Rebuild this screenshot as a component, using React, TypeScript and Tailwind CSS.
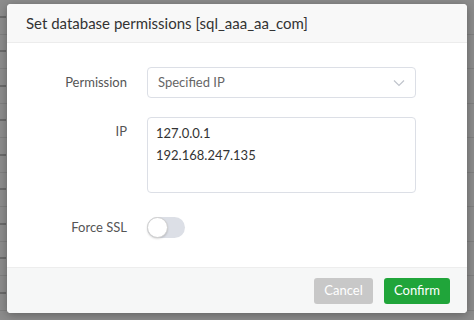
import React from "react";

export default function App() {
  const rows = Array.from({ length: 9 });
  return (
    <div
      className="relative w-[474px] h-[320px] overflow-hidden bg-[#8c8c8c]"
      style={{ fontFamily: 'Lato, "Noto Sans", sans-serif' }}
    >
      <div className="absolute inset-0 flex flex-col">
        {rows.map((_, i) => (
          <div key={i} className="h-[34.5px] shrink-0 border-b border-[#7f7f7f] flex items-center">
            <div className="w-[6px] h-[2px] bg-[#6a6a6a]" />
          </div>
        ))}
      </div>
      <div className="absolute left-[7px] top-[4px] w-[460px] h-[309px] bg-white rounded-[4px] shadow-[0_2px_10px_rgba(0,0,0,0.3)] flex flex-col overflow-hidden">
        <div className="h-[39px] shrink-0 bg-[#f8f8f8] border-b border-[#ececec] flex items-center pl-[19px] text-[15px] text-[#333]">
          Set database permissions [sql_aaa_aa_com]
        </div>
        <div className="flex-1 flex flex-col pt-[24px] text-[13px] text-[#555]">
          <div className="flex items-center h-[31px]">
            <div className="w-[120px] text-right">Permission</div>
            <div className="ml-[20px] w-[269px] h-[31px] border border-[#dcdfe6] rounded-[4px] flex items-center justify-between pl-[10px] pr-[10px] text-[#666]">
              <span>Specified IP</span>
              <svg width="12" height="8" viewBox="0 0 12 8" fill="none">
                <path d="M1 1.5 L6 6.5 L11 1.5" stroke="#c0c4cc" strokeWidth="1.2" />
              </svg>
            </div>
          </div>
          <div className="flex items-start mt-[19px]">
            <div className="w-[120px] text-right pt-[5px]">IP</div>
            <div className="ml-[20px] w-[269px] h-[76px] border border-[#dcdfe6] rounded-[4px] pl-[8px] pt-[4px] text-[#333] leading-[22px]">
              <div>127.0.0.1</div>
              <div>192.168.247.135</div>
            </div>
          </div>
          <div className="flex items-center mt-[24px]">
            <div className="w-[120px] text-right">Force SSL</div>
            <div className="ml-[20px] relative w-[38px] h-[21px] rounded-full bg-[#dcdfe6]">
              <div className="absolute left-0 top-0 w-[21px] h-[21px] rounded-full bg-white border border-[#cfcfcf] shadow-[0_1px_2px_rgba(0,0,0,0.15)]" />
            </div>
          </div>
        </div>
        <div className="h-[46px] shrink-0 bg-[#f6f7f7] border-t border-[#ededed] flex items-center justify-end pr-[17px] gap-[11px] text-[13px] text-white">
          <button className="w-[59px] h-[26px] rounded-[3px] bg-[#c8c8c8]">Cancel</button>
          <button className="w-[66px] h-[26px] rounded-[3px] bg-[#20a53a]">Confirm</button>
        </div>
      </div>
    </div>
  );
}
